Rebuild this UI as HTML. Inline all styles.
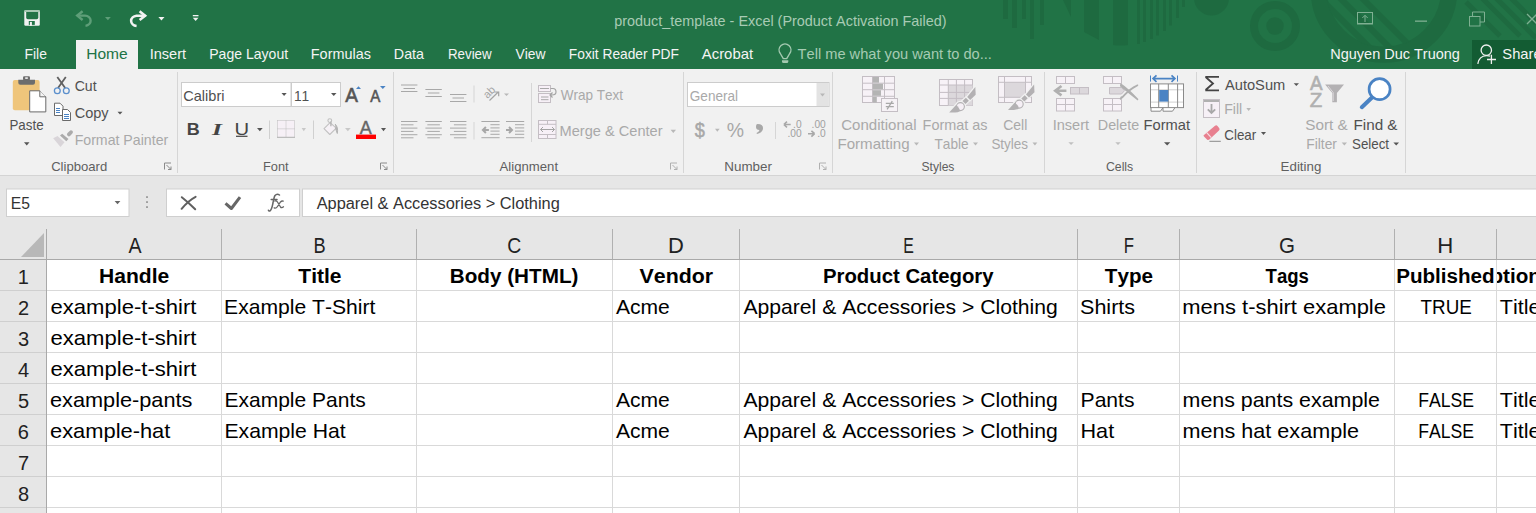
<!DOCTYPE html><html><head><meta charset="utf-8"><style>html,body{margin:0;padding:0;width:1536px;height:513px;overflow:hidden;background:#fff}svg{display:block;font-family:"Liberation Sans",sans-serif;font-kerning:none}text{white-space:pre}</style></head><body><svg width="1536" height="513" viewBox="0 0 1536 513"><rect x="0" y="0" width="1536" height="69" fill="#217346" />
<g fill="#1e6a40"><rect x="1003" y="0" width="5" height="19"/><rect x="1012" y="0" width="5" height="28"/><rect x="1022" y="0" width="4" height="19"/><rect x="1030" y="0" width="4" height="39"/><rect x="1040" y="0" width="4" height="25"/><path d="M1063 0 L1071 0 L1071 17 Z"/><path d="M1084 0 L1099 0 L1099 40 L1084 32 Z"/><path d="M1113 0 L1128 0 L1128 45 Q1120 46 1113 45 Z"/><rect x="1137" y="0" width="3" height="44"/><rect x="1143" y="0" width="3" height="42"/><rect x="1150" y="0" width="3" height="39"/><rect x="1156" y="0" width="3" height="35.5"/><rect x="1163" y="0" width="3" height="31"/><rect x="1169" y="0" width="3" height="25.5"/><rect x="1176" y="0" width="3" height="18"/><rect x="1182" y="0" width="3" height="7"/><circle cx="1211.5" cy="-2" r="17.5"/><circle cx="1275" cy="26" r="21" fill="none" stroke="#1e6a40" stroke-width="8"/><circle cx="1275" cy="26" r="8.7"/><circle cx="1384" cy="-10.6" r="65.2" fill="none" stroke="#1e6a40" stroke-width="16.4"/></g>
<clipPath id="cc"><circle cx="1384" cy="-10.6" r="58"/></clipPath>
<g stroke="#1e6a40" stroke-width="6" clip-path="url(#cc)"><line x1="1310" y1="-12" x2="1374" y2="52"/><line x1="1330" y1="-12" x2="1394" y2="52"/><line x1="1352" y1="-12" x2="1416" y2="52"/></g>
<g stroke="#1e6a40" stroke-width="5"><line x1="1466" y1="2" x2="1500" y2="36"/><line x1="1478" y1="-6" x2="1520" y2="36"/><line x1="1492" y1="-6" x2="1536" y2="38"/><line x1="1507" y1="-6" x2="1536" y2="23"/></g>
<rect x="1472" y="40" width="64" height="29" fill="#135c33" />
<rect x="76" y="40" width="62" height="29" fill="#f1f1f1" />
<g><rect x="24.3" y="10.3" width="15.5" height="15.5" rx="1.2" fill="#f2f2f2"/><rect x="24.3" y="10.3" width="15.5" height="1.6" fill="#9cc5ab"/><path d="M26.2 11.9 H38.3 V17.6 Q38.3 19.2 36.7 19.2 H27.8 Q26.2 19.2 26.2 17.6 Z" fill="#217346"/><rect x="28.8" y="21" width="6" height="3.9" fill="#217346"/><rect x="29.9" y="21.9" width="2" height="3.9" fill="#f2f2f2"/></g>
<g fill="none" stroke="#5e9e78" stroke-width="2.4" stroke-linecap="butt"><path d="M77 15.6 H85 A6.2 5.2 0 0 1 85.5 25.9"/><path d="M82.6 11.2 L77.2 15.6 L82.6 20" /></g>
<path d="M105 17.1 H110.8 L107.9 20.3 Z" fill="#5e9e78"/>
<g fill="none" stroke="#f2f2f2" stroke-width="2.5"><path d="M145.5 15.7 H136.5 A6.3 5.2 0 0 0 136.6 26"/><path d="M139.6 11.2 L145.2 15.7 L139.6 20.1" /></g>
<path d="M158.4 17 H164.5 L161.45 20.6 Z" fill="#f2f2f2"/>
<rect x="192.8" y="15" width="5.7" height="1.3" fill="#f2f2f2"/><path d="M192.8 17.8 H198.5 L195.65 21.1 Z" fill="#f2f2f2"/>
<text x="614.27" y="25.60" font-size="14.5" font-weight="normal" fill="#a8cbb4" textLength="332.32" lengthAdjust="spacingAndGlyphs" >product_template - Excel (Product Activation Failed)</text>
<g fill="none" stroke="#7fb092" stroke-width="1"><rect x="1357.5" y="12.5" width="15" height="11.5"/><line x1="1357.5" y1="23.5" x2="1372.5" y2="23.5"/><path d="M1365 22 V15.5 M1362.3 18 L1365 15.3 L1367.7 18"/><rect x="1469.5" y="16.5" width="10.5" height="9.5"/><path d="M1472.5 16.5 V12 H1484.5 V22 H1480"/><path d="M1527 14 L1537 24 M1537 14 L1527 24" stroke-width="1.3"/></g>
<rect x="1415" y="20.5" width="12" height="1.3" fill="#7fb092"/>
<text x="24.56" y="59.30" font-size="14.5" font-weight="normal" fill="#f4f4f4" textLength="22.35" lengthAdjust="spacingAndGlyphs" >File</text>
<text x="86.22" y="59.30" font-size="14.5" font-weight="normal" fill="#217346" textLength="41.47" lengthAdjust="spacingAndGlyphs" >Home</text>
<text x="149.65" y="59.30" font-size="14.5" font-weight="normal" fill="#f4f4f4" textLength="36.45" lengthAdjust="spacingAndGlyphs" >Insert</text>
<text x="209.25" y="59.30" font-size="14.5" font-weight="normal" fill="#f4f4f4" textLength="78.85" lengthAdjust="spacingAndGlyphs" >Page Layout</text>
<text x="310.82" y="59.30" font-size="14.5" font-weight="normal" fill="#f4f4f4" textLength="60.10" lengthAdjust="spacingAndGlyphs" >Formulas</text>
<text x="393.83" y="59.30" font-size="14.5" font-weight="normal" fill="#f4f4f4" textLength="30.17" lengthAdjust="spacingAndGlyphs" >Data</text>
<text x="447.91" y="59.30" font-size="14.5" font-weight="normal" fill="#f4f4f4" textLength="43.76" lengthAdjust="spacingAndGlyphs" >Review</text>
<text x="515.54" y="59.30" font-size="14.5" font-weight="normal" fill="#f4f4f4" textLength="30.03" lengthAdjust="spacingAndGlyphs" >View</text>
<text x="568.87" y="59.30" font-size="14.5" font-weight="normal" fill="#f4f4f4" textLength="110.08" lengthAdjust="spacingAndGlyphs" >Foxit Reader PDF</text>
<text x="701.77" y="59.30" font-size="14.5" font-weight="normal" fill="#f4f4f4" textLength="51.34" lengthAdjust="spacingAndGlyphs" >Acrobat</text>
<text x="797.57" y="59.30" font-size="14.5" font-weight="normal" fill="#a6cbb3" textLength="194.36" lengthAdjust="spacingAndGlyphs" >Tell me what you want to do...</text>
<path d="M783.3 58.6 L780.3 53.5 A5.9 5.9 0 1 1 789.7 53.5 L786.7 58.6 Z" fill="none" stroke="#a3c9b0" stroke-width="1.4" stroke-linejoin="round"/><path d="M782 60.2 H788.3 V61.5 Q788.3 63 786.8 63 H783.5 Q782 63 782 61.5 Z" fill="#a3c9b0"/>
<text x="1330.31" y="59.30" font-size="14.5" font-weight="normal" fill="#f4f4f4" textLength="129.62" lengthAdjust="spacingAndGlyphs" >Nguyen Duc Truong</text>
<text x="1502.33" y="59.30" font-size="14.5" font-weight="normal" fill="#f4f4f4" textLength="39.32" lengthAdjust="spacingAndGlyphs" >Share</text>
<g fill="none" stroke="#f0f0f0" stroke-width="1.3"><circle cx="1486.3" cy="50.2" r="5.2"/><path d="M1477.8 63.8 Q1479 56 1486.5 55.6 Q1488.5 55.5 1490 56.2"/><path d="M1487 59.5 H1496 M1491.4 54.8 V64"/></g>
<rect x="0" y="69" width="1536" height="107" fill="#f1f1f1" />
<rect x="0" y="175" width="1536" height="1" fill="#d4d4d4" />
<rect x="0" y="176" width="1536" height="53" fill="#e6e6e6" />
<rect x="177" y="72" width="1" height="101" fill="#d6d6d6" />
<rect x="393" y="72" width="1" height="101" fill="#d6d6d6" />
<rect x="683" y="72" width="1" height="101" fill="#d6d6d6" />
<rect x="832" y="72" width="1" height="101" fill="#d6d6d6" />
<rect x="1044" y="72" width="1" height="101" fill="#d6d6d6" />
<rect x="1196" y="72" width="1" height="101" fill="#d6d6d6" />
<rect x="1405" y="72" width="1" height="101" fill="#d6d6d6" />
<text x="51.13" y="170.60" font-size="13.5" font-weight="normal" fill="#5f5f5f" textLength="56.11" lengthAdjust="spacingAndGlyphs" >Clipboard</text>
<g fill="none" stroke="#8a8a8a" stroke-width="1"><path d="M164.5 169.5 V163.0 H171"/><path d="M166.5 165.0 L171 169.5 M171 166.5 V169.5 H168"/></g>
<text x="9.40" y="129.80" font-size="14.5" font-weight="normal" fill="#505050" textLength="34.19" lengthAdjust="spacingAndGlyphs" >Paste</text>
<path d="M24 142.3 H29.5 L26.75 145.5 Z" fill="#555"/>
<g><rect x="12.8" y="80.1" width="26.8" height="30.1" rx="2" fill="#efc57b"/><path d="M18.3 79.7 H35 V82.8 Q35 84.8 33 84.8 H20.3 Q18.3 84.8 18.3 82.8 Z" fill="#6d6d6d"/><rect x="23" y="76.2" width="7" height="4" rx="1.2" fill="#6d6d6d"/><rect x="25.2" y="77.3" width="2.6" height="1.6" fill="#efefef"/><path d="M29.7 90.8 H39.8 L45.8 96.8 V111.9 H29.7 Z" fill="#fff" stroke="#6a6a6a" stroke-width="1"/><path d="M39.8 90.8 V96.8 H45.8" fill="#f4f4f4" stroke="#6a6a6a" stroke-width="1"/></g>
<text x="74.68" y="91.00" font-size="14.5" font-weight="normal" fill="#505050" textLength="21.92" lengthAdjust="spacingAndGlyphs" >Cut</text>
<g fill="none"><path d="M57.3 77 L65.2 88 M65.8 77 L58 88" stroke="#606060" stroke-width="1.8"/><circle cx="57.3" cy="90.7" r="2.9" stroke="#5b8fcc" stroke-width="1.3"/><circle cx="66.3" cy="90.7" r="2.9" stroke="#5b8fcc" stroke-width="1.3"/></g>
<text x="74.66" y="117.80" font-size="14.5" font-weight="normal" fill="#505050" textLength="33.97" lengthAdjust="spacingAndGlyphs" >Copy</text>
<path d="M117.5 111.7 H122.5 L120.0 114.5 Z" fill="#555"/>
<g fill="#fff" stroke="#6a6a6a" stroke-width="1"><path d="M54.5 103.2 H60 L63 106.2 V115.5 H54.5 Z"/><path d="M62.5 109.5 H67.5 L70.5 112.5 V120.5 H62.5 Z"/></g><g stroke="#4a83c4" stroke-width="1"><path d="M56 108.5 H60 M56 110.5 H60 M56 112.5 H60 M64 114.5 H69 M64 116.5 H69 M64 118.5 H69"/></g>
<text x="74.64" y="144.90" font-size="14.5" font-weight="normal" fill="#a9a9a9" textLength="93.60" lengthAdjust="spacingAndGlyphs" >Format Painter</text>
<g><path d="M53.2 138.2 L57.5 136 L64.5 142.3 L60.5 146.9 Z" fill="#d9d5d9"/><path d="M60 135.5 L62.2 133.8 L68.5 139.1 L66.3 141.3 Z" fill="#ababab"/><path d="M68.9 134.4 L71 132.2" stroke="#ababab" stroke-width="3.8" stroke-linecap="round"/></g>
<text x="262.95" y="170.60" font-size="13.5" font-weight="normal" fill="#5f5f5f" textLength="25.65" lengthAdjust="spacingAndGlyphs" >Font</text>
<g fill="none" stroke="#8a8a8a" stroke-width="1"><path d="M380.5 169.5 V163.0 H387"/><path d="M382.5 165.0 L387 169.5 M387 166.5 V169.5 H384"/></g>
<rect x="181.5" y="82.5" width="109.5" height="24" fill="#fff" stroke="#cccccc" stroke-width="1"/>
<rect x="291.5" y="82.5" width="49" height="24" fill="#fff" stroke="#cccccc" stroke-width="1"/>
<text x="183.26" y="101.20" font-size="14.5" font-weight="normal" fill="#505050" textLength="41.22" lengthAdjust="spacingAndGlyphs" >Calibri</text>
<path d="M281.5 93 H286.7 L284.1 96 Z" fill="#555"/>
<text x="293.95" y="101.20" font-size="14.5" font-weight="normal" fill="#505050" textLength="15.32" lengthAdjust="spacingAndGlyphs" >11</text>
<path d="M331 93 H336.5 L333.75 96 Z" fill="#555"/>
<text x="345.16" y="102.30" font-size="19.5" font-weight="normal" fill="#555" textLength="12.67" lengthAdjust="spacingAndGlyphs" stroke="#555" stroke-width="0.6">A</text>
<path d="M356 89 H361 L358.5 86.3 Z" fill="#4a83c4"/>
<text x="370.17" y="102.30" font-size="17" font-weight="normal" fill="#555" textLength="10.06" lengthAdjust="spacingAndGlyphs" stroke="#555" stroke-width="0.6">A</text>
<path d="M380 86 H385.6 L382.8 89 Z" fill="#4a83c4"/>
<text x="186.79" y="134.60" font-size="17" font-weight="bold" fill="#444" textLength="13.03" lengthAdjust="spacingAndGlyphs" >B</text>
<text x="212" y="134.6" font-size="17.5" font-style="italic" font-weight="bold" fill="#444" font-family="Liberation Serif" textLength="10" lengthAdjust="spacingAndGlyphs">I</text>
<text x="234.44" y="134.60" font-size="16.5" font-weight="normal" fill="#444" textLength="14.62" lengthAdjust="spacingAndGlyphs" >U</text>
<rect x="236" y="135.7" width="11.5" height="1.2" fill="#444" />
<path d="M257 128 H262.7 L259.85 131.3 Z" fill="#555"/>
<rect x="269" y="120.5" width="1" height="18.5" fill="#d0d0d0" />
<rect x="277.5" y="120.5" width="17" height="16.5" fill="#f6f0f6"/><g fill="none" stroke="#bdbdbd" stroke-width="1" stroke-dasharray="1 1"><path d="M277.5 120.5 H294.5 V137 M277.5 120.5 V137 M286 120.5 V137 M277.5 128.8 H294.5"/></g><path d="M277 137.3 H295" stroke="#b0b0b0" stroke-width="1"/>
<path d="M301.6 128 H306 L303.8 131.3 Z" fill="#c8c8c8"/>
<rect x="313" y="120.5" width="1" height="18.5" fill="#d0d0d0" />
<path d="M330.1 122.6 L336.2 128.2 L329.8 134.5 L324 128.7 Z" fill="#f6f1f6" stroke="#c2c2c2" stroke-width="1.1" stroke-linejoin="round"/><circle cx="329.8" cy="120.6" r="1.9" fill="none" stroke="#c0c0c0" stroke-width="1.1"/><path d="M330.9 121.5 V126.3" stroke="#b0b0b0" stroke-width="1.2"/><path d="M335 124 Q338.5 127 337.3 133.5 Q336 130 335.5 128" fill="#b4b4b4" stroke="#b4b4b4" stroke-width="1"/>
<path d="M345 128 H350.7 L347.85 131.3 Z" fill="#c8c8c8"/>
<text x="359.76" y="133.70" font-size="18" font-weight="normal" fill="#666" textLength="11.97" lengthAdjust="spacingAndGlyphs" stroke="#666" stroke-width="0.4">A</text>
<rect x="356" y="134.6" width="20" height="4.4" fill="#ff0000" />
<path d="M381 128 H386 L383.5 131.3 Z" fill="#555"/>
<text x="499.57" y="170.60" font-size="13.5" font-weight="normal" fill="#5f5f5f" textLength="58.52" lengthAdjust="spacingAndGlyphs" >Alignment</text>
<g fill="none" stroke="#b0b0b0" stroke-width="1"><path d="M670.5 169.5 V163.0 H677"/><path d="M672.5 165.0 L677 169.5 M677 166.5 V169.5 H674"/></g>
<rect x="401" y="84.5" width="16.399999999999977" height="1" fill="#a8a8a8" />
<rect x="403.5" y="88" width="11.5" height="1" fill="#a8a8a8" />
<rect x="401" y="91" width="16.399999999999977" height="1" fill="#a8a8a8" />
<rect x="425.4" y="89" width="16.399999999999977" height="1" fill="#a8a8a8" />
<rect x="427.9" y="92.5" width="11.5" height="1" fill="#a8a8a8" />
<rect x="425.4" y="96" width="16.399999999999977" height="1" fill="#a8a8a8" />
<rect x="450" y="94" width="16.399999999999977" height="1" fill="#a8a8a8" />
<rect x="452.5" y="97.5" width="11.5" height="1" fill="#a8a8a8" />
<rect x="450" y="101" width="16.399999999999977" height="1" fill="#a8a8a8" />
<rect x="473.5" y="85.5" width="1" height="17" fill="#d6d6d6" />
<text x="0" y="0" font-size="11" fill="#a4a4a4" transform="translate(487.5 99) rotate(-45)" textLength="12" lengthAdjust="spacingAndGlyphs">ab</text>
<path d="M489.5 100.5 L498.5 91.8 M494.5 92 H498.7 V96.2" stroke="#a4a4a4" stroke-width="1.2" fill="none"/>
<path d="M504 93.5 H509 L506.5 96 Z" fill="#b8b8b8"/>
<rect x="401" y="121" width="16.399999999999977" height="1" fill="#a8a8a8" />
<rect x="401" y="124.3" width="12.5" height="1" fill="#a8a8a8" />
<rect x="401" y="127.6" width="16.399999999999977" height="1" fill="#a8a8a8" />
<rect x="401" y="130.9" width="12.5" height="1" fill="#a8a8a8" />
<rect x="401" y="134.2" width="16.399999999999977" height="1" fill="#a8a8a8" />
<rect x="401" y="137.3" width="12.5" height="1" fill="#a8a8a8" />
<rect x="425.4" y="121" width="16.399999999999977" height="1" fill="#a8a8a8" />
<rect x="427.34999999999997" y="124.3" width="12.5" height="1" fill="#a8a8a8" />
<rect x="425.4" y="127.6" width="16.399999999999977" height="1" fill="#a8a8a8" />
<rect x="427.34999999999997" y="130.9" width="12.5" height="1" fill="#a8a8a8" />
<rect x="425.4" y="134.2" width="16.399999999999977" height="1" fill="#a8a8a8" />
<rect x="427.34999999999997" y="137.3" width="12.5" height="1" fill="#a8a8a8" />
<rect x="450.0" y="121" width="16.399999999999977" height="1" fill="#a8a8a8" />
<rect x="453.9" y="124.3" width="12.5" height="1" fill="#a8a8a8" />
<rect x="450.0" y="127.6" width="16.399999999999977" height="1" fill="#a8a8a8" />
<rect x="453.9" y="130.9" width="12.5" height="1" fill="#a8a8a8" />
<rect x="450.0" y="134.2" width="16.399999999999977" height="1" fill="#a8a8a8" />
<rect x="453.9" y="137.3" width="12.5" height="1" fill="#a8a8a8" />
<rect x="473.5" y="122" width="1" height="17.5" fill="#d6d6d6" />
<rect x="481.4" y="121" width="18.19999999999999" height="1" fill="#a8a8a8" />
<rect x="481.4" y="137.2" width="18.19999999999999" height="1" fill="#a8a8a8" />
<rect x="490.4" y="124.2" width="9.199999999999989" height="1" fill="#a8a8a8" />
<rect x="490.4" y="127.4" width="9.199999999999989" height="1" fill="#a8a8a8" />
<rect x="490.4" y="130.6" width="9.199999999999989" height="1" fill="#a8a8a8" />
<rect x="490.4" y="133.8" width="9.199999999999989" height="1" fill="#a8a8a8" />
<path d="M488.9 130 H482.9 M485.9 127 L482.9 130 L485.9 133" stroke="#a8a8a8" stroke-width="2" fill="none"/>
<rect x="506" y="121" width="18.200000000000045" height="1" fill="#a8a8a8" />
<rect x="506" y="137.2" width="18.200000000000045" height="1" fill="#a8a8a8" />
<rect x="515" y="124.2" width="9.200000000000045" height="1" fill="#a8a8a8" />
<rect x="515" y="127.4" width="9.200000000000045" height="1" fill="#a8a8a8" />
<rect x="515" y="130.6" width="9.200000000000045" height="1" fill="#a8a8a8" />
<rect x="515" y="133.8" width="9.200000000000045" height="1" fill="#a8a8a8" />
<path d="M506 130 H512 M509 127 L512 130 L509 133" stroke="#a8a8a8" stroke-width="2" fill="none"/>
<rect x="531" y="83" width="1" height="59" fill="#d6d6d6" />
<g fill="#f7f0f7" stroke="#c4bec4" stroke-width="1"><rect x="538.5" y="85.5" width="12" height="6"/><rect x="538.5" y="93.5" width="12" height="9"/></g><path d="M540 88.5 H549 M541 97 H548.5 M541 99.7 H548.5" stroke="#a8a8a8" stroke-width="1"/><path d="M550.5 88.5 H553 Q556 88.5 556 92 Q556 95 552 95 H550 M552.5 92.5 L550 95 L552.5 97.5" stroke="#a4a4a4" stroke-width="1.2" fill="none"/>
<text x="560.74" y="100.30" font-size="14.5" font-weight="normal" fill="#a9a9a9" textLength="62.36" lengthAdjust="spacingAndGlyphs" >Wrap Text</text>
<g fill="#f7f0f7" stroke="#c4bec4" stroke-width="1"><rect x="538.5" y="120.5" width="17.5" height="18"/><path d="M538.5 124.3 H556 M538.5 134.5 H556 M547.5 120.5 V124.3 M547.5 134.5 V138.5" fill="none"/></g><path d="M540.5 129.5 H554.5 M543 127 L540.5 129.5 L543 132 M552 127 L554.5 129.5 L552 132" stroke="#a4a4a4" stroke-width="1" fill="none"/>
<text x="559.60" y="135.70" font-size="14.5" font-weight="normal" fill="#a9a9a9" textLength="102.94" lengthAdjust="spacingAndGlyphs" >Merge &amp; Center</text>
<path d="M670.6 129.8 H676 L673.3 133 Z" fill="#b8b8b8"/>
<text x="724.30" y="170.60" font-size="13.5" font-weight="normal" fill="#5f5f5f" textLength="47.62" lengthAdjust="spacingAndGlyphs" >Number</text>
<g fill="none" stroke="#b0b0b0" stroke-width="1"><path d="M819.5 169.5 V163.0 H826"/><path d="M821.5 165.0 L826 169.5 M826 166.5 V169.5 H823"/></g>
<rect x="687.5" y="82.5" width="141.5" height="24" fill="#fff" stroke="#cccccc" stroke-width="1"/>
<rect x="816.5" y="83" width="12" height="23" fill="#e3e3e3" />
<path d="M820 93.5 H825 L822.5 96.5 Z" fill="#b8b8b8"/>
<text x="689.82" y="100.70" font-size="14.5" font-weight="normal" fill="#a9a9a9" textLength="48.29" lengthAdjust="spacingAndGlyphs" >General</text>
<text x="694.81" y="137.00" font-size="20.5" font-weight="normal" fill="#a8a8a8" textLength="10.09" lengthAdjust="spacingAndGlyphs" stroke="#a8a8a8" stroke-width="0.5">$</text>
<path d="M715 128.7 H719.7 L717.35 131.7 Z" fill="#b8b8b8"/>
<text x="726.71" y="136.90" font-size="19.5" font-weight="normal" fill="#a8a8a8" textLength="17.29" lengthAdjust="spacingAndGlyphs" >%</text>
<path d="M757.5 124 Q763.5 124 763 129 Q762 133 757 134 L756.5 133 Q759 132 759.5 130 Q756 130 756 127 Q756 124 757.5 124 Z" fill="#a8a8a8"/>
<rect x="775" y="122" width="1" height="17" fill="#d6d6d6" />
<text x="793.09" y="127.8" font-size="10.2" fill="#a0a0a0">.0</text>
<text x="787.42" y="137.3" font-size="10.2" fill="#a0a0a0">.00</text>
<text x="811.62" y="127.8" font-size="10.2" fill="#a0a0a0">.00</text>
<text x="817.29" y="137.3" font-size="10.2" fill="#a0a0a0">.0</text>
<path d="M783.8 124.5 L787 121.6 M783.8 124.5 L787 127.4 M784 124.5 H790.7" stroke="#a8a8a8" stroke-width="1.6" fill="none"/>
<path d="M814.6 133.7 L811.4 130.8 M814.6 133.7 L811.4 136.6 M808 133.7 H814.4" stroke="#a8a8a8" stroke-width="1.6" fill="none"/>
<text x="921.45" y="170.60" font-size="13.5" font-weight="normal" fill="#5f5f5f" textLength="32.99" lengthAdjust="spacingAndGlyphs" >Styles</text>
<g><rect x="862.5" y="76.5" width="32" height="26" fill="#f7f2f7" stroke="#c4bec4"/><path d="M862.5 83.2 H894.5 M862.5 89.7 H894.5 M862.5 96.3 H894.5 M872.5 76.5 V102.5 M884.5 76.5 V102.5" stroke="#c4bec4" fill="none"/><rect x="873" y="77" width="6" height="5.7" fill="#b4b4b4"/><rect x="873" y="83.7" width="10" height="5.5" fill="#b4b4b4"/><rect x="873" y="90.2" width="8" height="5.6" fill="#b4b4b4"/><rect x="873" y="96.8" width="3.8" height="5.7" fill="#b4b4b4"/><rect x="881.5" y="98.5" width="16" height="13" fill="#f6f2f6" stroke="#c4bec4"/><path d="M885.8 103.3 H893.8 M885.8 106.7 H893.8 M892.3 101.1 L887.1 109.3" stroke="#a8a8a8" stroke-width="1.3" fill="none"/></g>
<text x="841.24" y="129.80" font-size="14.5" font-weight="normal" fill="#a9a9a9" textLength="75.27" lengthAdjust="spacingAndGlyphs" >Conditional</text>
<text x="837.46" y="149.20" font-size="14.5" font-weight="normal" fill="#a9a9a9" textLength="72.11" lengthAdjust="spacingAndGlyphs" >Formatting</text>
<path d="M914 142.6 H919 L916.5 145.5 Z" fill="#b8b8b8"/>
<g><rect x="939.5" y="79.5" width="33" height="26" fill="#f7f2f7" stroke="#c4bec4"/><rect x="948" y="85" width="24.5" height="20.5" fill="#dcd8dc"/><path d="M939.5 85 H972.5 M939.5 92.4 H972.5 M939.5 98.4 H972.5 M948.3 79.5 V105.5 M956.4 79.5 V105.5 M964.6 79.5 V105.5" stroke="#c4bec4" fill="none"/></g>
<g fill="#f1f1f1" stroke="#f1f1f1" stroke-width="2.4"><path d="M975.3 87.0 L975.7 94.7 L970.2 99.9 L967.2 96.9 Z"/><path d="M965.9 97.7 L968.9 100.7 L965.5 103.9 L962.5 100.9 Z"/><circle cx="960.4" cy="106.6" r="4.6"/><path d="M949.2 112.4 L955.5 105.5 Q958.5 107.5 959.5 111.0 Q957.5 112.4 955.0 112.4 Z"/></g>
<path d="M975.3 87.0 L975.7 94.7 L970.2 99.9 L967.2 96.9 Z" fill="#b3b1b3"/><path d="M965.9 97.7 L968.9 100.7 L965.5 103.9 L962.5 100.9 Z" fill="#b3b1b3"/><circle cx="960.4" cy="106.6" r="4" fill="#f6f0f6" stroke="#b3b1b3" stroke-width="1.1"/><path d="M949.2 112.4 L955.8 105.2 Q959.5 107.0 960.0 111.2 Q958.0 112.4 955.0 112.4 Z" fill="#b3b1b3"/>
<text x="922.62" y="129.80" font-size="14.5" font-weight="normal" fill="#a9a9a9" textLength="64.90" lengthAdjust="spacingAndGlyphs" >Format as</text>
<text x="934.49" y="149.20" font-size="14.5" font-weight="normal" fill="#a9a9a9" textLength="34.11" lengthAdjust="spacingAndGlyphs" >Table</text>
<path d="M973 142.6 H978 L975.5 145.5 Z" fill="#b8b8b8"/>
<g><rect x="998.5" y="76.5" width="33" height="26" fill="#f7f2f7" stroke="#c4bec4"/><rect x="1004.5" y="82.3" width="21" height="15" fill="#dcd8dc"/><path d="M998.5 82.3 H1031.5 M998.5 97.3 H1031.5 M1004.5 76.5 V102.5 M1025.5 76.5 V102.5" stroke="#c4bec4" fill="none"/></g>
<g fill="#f1f1f1" stroke="#f1f1f1" stroke-width="2.4"><path d="M1034.1 84.5 L1034.5 92.2 L1029.0 97.4 L1026.0 94.4 Z"/><path d="M1024.7 95.2 L1027.7 98.2 L1024.3 101.4 L1021.3 98.4 Z"/><circle cx="1019.2" cy="104.1" r="4.6"/><path d="M1008.0 109.9 L1014.3 103.0 Q1017.3 105.0 1018.3 108.5 Q1016.3 109.9 1013.8 109.9 Z"/></g>
<path d="M1034.1 84.5 L1034.5 92.2 L1029.0 97.4 L1026.0 94.4 Z" fill="#b3b1b3"/><path d="M1024.7 95.2 L1027.7 98.2 L1024.3 101.4 L1021.3 98.4 Z" fill="#b3b1b3"/><circle cx="1019.2" cy="104.1" r="4" fill="#f6f0f6" stroke="#b3b1b3" stroke-width="1.1"/><path d="M1008.0 109.9 L1014.6 102.7 Q1018.3 104.5 1018.8 108.7 Q1016.8 109.9 1013.8 109.9 Z" fill="#b3b1b3"/>
<text x="1003.29" y="129.80" font-size="14.5" font-weight="normal" fill="#a9a9a9" textLength="24.04" lengthAdjust="spacingAndGlyphs" >Cell</text>
<text x="991.39" y="149.20" font-size="14.5" font-weight="normal" fill="#a9a9a9" textLength="36.60" lengthAdjust="spacingAndGlyphs" >Styles</text>
<path d="M1032.5 142.6 H1037.3 L1034.9 145.5 Z" fill="#b8b8b8"/>
<text x="1105.98" y="170.60" font-size="13.5" font-weight="normal" fill="#5f5f5f" textLength="27.27" lengthAdjust="spacingAndGlyphs" >Cells</text>
<g fill="#f7f2f7" stroke="#c4bec4"><rect x="1056.5" y="76.5" width="18" height="7"/><path d="M1065.5 76.5 V83.5" fill="none"/><rect x="1056.5" y="98.5" width="18" height="12.5"/><path d="M1065.5 98.5 V111 M1056.5 104.5 H1074.5" fill="none"/></g>
<rect x="1070.5" y="87.5" width="18" height="6.5" fill="#dcd8dc" stroke="#c4bec4"/><path d="M1079.5 87.5 V94" stroke="#c4bec4"/>
<path d="M1066.4 90.7 H1055.5 M1061.5 86 L1055.2 90.7 L1061.5 95.4" stroke="#b0b0b0" stroke-width="2.6" fill="none"/>
<text x="1052.65" y="129.80" font-size="14.5" font-weight="normal" fill="#a9a9a9" textLength="36.45" lengthAdjust="spacingAndGlyphs" >Insert</text>
<path d="M1068.4 142.2 H1073.8 L1071.1 145 Z" fill="#c0c0c0"/>
<g fill="#f7f2f7" stroke="#c4bec4"><rect x="1103.5" y="76.5" width="18" height="7"/><path d="M1112.5 76.5 V83.5" fill="none"/><rect x="1103.5" y="98.5" width="18" height="12.5"/><path d="M1112.5 98.5 V111 M1103.5 104.5 H1121.5" fill="none"/></g>
<path d="M1109.5 87.5 H1121.5 L1124.5 90.7 L1121.5 94 H1109.5 Z" fill="#dcd8dc" stroke="#c4bec4"/>
<g stroke="#f1f1f1" stroke-width="2" fill="none"><path d="M1121 84.5 Q1129 91 1137 99 M1137 85.3 Q1128 90.5 1121 98.8"/></g>
<path d="M1121 84.3 Q1128 89 1137.5 99.3 Q1129.5 93 1120.8 85.8 Z M1137.5 85.2 Q1130 88 1120.6 98.9 Q1121.5 96 1122.3 97.5 Q1128 90.5 1137.5 85.2 Z" fill="#b0b0b0" stroke="#b0b0b0" stroke-width="1.6" stroke-linejoin="round"/>
<text x="1097.82" y="129.80" font-size="14.5" font-weight="normal" fill="#a9a9a9" textLength="41.41" lengthAdjust="spacingAndGlyphs" >Delete</text>
<path d="M1115.3 142.2 H1120.7 L1118.0 145 Z" fill="#c0c0c0"/>
<g><path d="M1150.5 75.5 V81.6 M1177.5 75.5 V81.6" stroke="#4a83c4" stroke-width="1"/><path d="M1153 78.6 H1175 M1156.5 75.3 L1153 78.6 L1156.5 81.9 M1171.5 75.3 L1175 78.6 L1171.5 81.9" stroke="#4a83c4" stroke-width="1.6" fill="none"/><path d="M1151 107.6 V111.2 H1160.5 L1163 107.6 M1163 107.6 V111.2 H1172.5 L1175 107.6" stroke="#8a8a8a" fill="#fff"/><rect x="1150.5" y="83.9" width="33" height="23.7" fill="#fff" stroke="#8a8a8a"/><path d="M1151 89.8 H1183 M1151 102.1 H1183" stroke="#d0d0d0" fill="none"/><path d="M1158.7 83.9 V107.6 M1168.3 83.9 V107.6 M1177.6 83.9 V107.6" stroke="#8a8a8a" fill="none"/><rect x="1159.2" y="90" width="9.1" height="11.6" fill="#4a83c4"/></g>
<text x="1143.60" y="129.80" font-size="14.5" font-weight="normal" fill="#505050" textLength="46.51" lengthAdjust="spacingAndGlyphs" >Format</text>
<path d="M1164 142.2 H1170.3 L1167.15 145.5 Z" fill="#555"/>
<text x="1280.61" y="170.60" font-size="13.5" font-weight="normal" fill="#5f5f5f" textLength="40.75" lengthAdjust="spacingAndGlyphs" >Editing</text>
<path d="M1205.3 76.8 H1219 M1205.6 77 L1213 83.5 L1205.6 90 M1205.3 90.3 H1219" stroke="#444" stroke-width="1.8" fill="none" stroke-linejoin="miter"/>
<text x="1224.97" y="89.80" font-size="14.5" font-weight="normal" fill="#505050" textLength="60.29" lengthAdjust="spacingAndGlyphs" >AutoSum</text>
<path d="M1293.7 83.3 H1299 L1296.35 86 Z" fill="#555"/>
<g><rect x="1203.5" y="99.5" width="16" height="18" fill="#f6f0f6" stroke="#c4bec4"/><rect x="1204" y="100" width="15" height="2" fill="#b0b0b0"/><path d="M1211.5 104 V113 M1207.8 109.3 L1211.5 113 L1215.2 109.3" stroke="#a8a8a8" stroke-width="1.8" fill="none"/></g>
<text x="1224.24" y="114.30" font-size="14.5" font-weight="normal" fill="#a9a9a9" textLength="18.00" lengthAdjust="spacingAndGlyphs" >Fill</text>
<path d="M1246.3 108 H1251 L1248.65 111 Z" fill="#b8b8b8"/>
<g><path d="M1203.7 135.3 L1215 125.8 Q1216.5 124.8 1217.5 126 L1219.3 128.3 Q1220 129.6 1219 130.5 L1209.4 139.6 Q1208 140.5 1207 139.5 L1204 136.5 Q1203.2 135.8 1203.7 135.3 Z" fill="#e8808f"/><path d="M1206 131.8 L1211.3 137.6" stroke="#f6dde2" stroke-width="1.2"/><path d="M1209.4 141.3 H1220.8" stroke="#8a8a8a" stroke-width="1"/></g>
<text x="1224.32" y="139.60" font-size="14.5" font-weight="normal" fill="#505050" textLength="31.90" lengthAdjust="spacingAndGlyphs" >Clear</text>
<path d="M1261 132 H1266 L1263.5 135 Z" fill="#555"/>
<text x="1309.96" y="90.00" font-size="20" font-weight="normal" fill="#b0b0b0" textLength="12.57" lengthAdjust="spacingAndGlyphs" stroke="#b0b0b0" stroke-width="0.6">A</text>
<text x="1309.65" y="107.20" font-size="20" font-weight="normal" fill="#b0b0b0" textLength="12.49" lengthAdjust="spacingAndGlyphs" stroke="#b0b0b0" stroke-width="0.6">Z</text>
<path d="M1325.1 84.6 H1344 L1336.9 93 V102.2 H1332.3 V93 Z" fill="#b3b1b3"/><path d="M1328 86 L1333.2 92.5 V101" stroke="#dcd8dc" stroke-width="1" fill="none"/>
<text x="1305.30" y="129.80" font-size="14.5" font-weight="normal" fill="#a9a9a9" textLength="42.53" lengthAdjust="spacingAndGlyphs" >Sort &amp;</text>
<text x="1306.27" y="149.20" font-size="14.5" font-weight="normal" fill="#a9a9a9" textLength="30.66" lengthAdjust="spacingAndGlyphs" >Filter</text>
<path d="M1341.7 142.6 H1347 L1344.35 145.5 Z" fill="#b8b8b8"/>
<g><path d="M1372.5 97 L1361.8 107.2" stroke="#4a83c4" stroke-width="4" stroke-linecap="round"/><circle cx="1379.6" cy="89.2" r="10.5" fill="#fff" stroke="#4a83c4" stroke-width="2.7"/></g>
<text x="1353.55" y="129.80" font-size="14.5" font-weight="normal" fill="#505050" textLength="43.99" lengthAdjust="spacingAndGlyphs" >Find &amp;</text>
<text x="1351.99" y="149.20" font-size="14.5" font-weight="normal" fill="#505050" textLength="37.10" lengthAdjust="spacingAndGlyphs" >Select</text>
<path d="M1393.4 142.6 H1399 L1396.2 145.5 Z" fill="#555"/>
<rect x="6.5" y="189" width="122.5" height="27.5" fill="#fff" stroke="#cfcfcf" stroke-width="1"/>
<text x="10.72" y="209.00" font-size="16.5" font-weight="normal" fill="#333" textLength="19.14" lengthAdjust="spacingAndGlyphs" >E5</text>
<path d="M114.6 201 H120.4 L117.5 204.3 Z" fill="#666"/>
<rect x="146" y="196.2" width="2" height="1.8" fill="#a0a0a0" />
<rect x="146" y="201.2" width="2" height="1.8" fill="#a0a0a0" />
<rect x="146" y="206.2" width="2" height="1.8" fill="#a0a0a0" />
<rect x="166.5" y="189" width="133" height="27.5" fill="#fff" stroke="#cfcfcf" stroke-width="1"/>
<path d="M181.8 197.2 Q188 202 195.2 209.2 M195.6 196.8 Q188.5 200.5 181.6 208.8" stroke="#606060" stroke-width="2" fill="none" stroke-linecap="round"/>
<path d="M225.5 203.3 L231.4 208.5 L240 197.2" stroke="#666" stroke-width="3" fill="none" stroke-linejoin="round"/>
<path d="M279.5 195 Q277 193.2 275 195.5 Q274 197 273 203 Q271.5 210.5 269.8 211 Q268.6 211.3 268.4 210.2 M271.2 199.5 H277" stroke="#666" stroke-width="1.5" fill="none" stroke-linecap="round"/>
<path d="M274.8 201 Q276.5 200.2 277.5 202 L280.5 207 Q281.5 208.4 283.5 206.8 M283.2 201.2 Q281.8 200.6 280.5 202 L277.5 206.5 Q276 208.7 274.2 207.8" stroke="#666" stroke-width="1.3" fill="none" stroke-linecap="round"/>
<rect x="302.5" y="189" width="1250" height="27.5" fill="#fff" stroke="#cfcfcf" stroke-width="1"/>
<text x="316.67" y="208.75" font-size="16" font-weight="normal" fill="#333" textLength="243.14" lengthAdjust="spacingAndGlyphs" >Apparel &amp; Accessories &gt; Clothing</text>
<rect x="0" y="229" width="1536" height="30" fill="#e6e6e6" />
<rect x="0" y="259" width="46" height="254" fill="#e6e6e6" />
<rect x="46" y="259" width="1490" height="254" fill="#ffffff" />
<rect x="221" y="229" width="1" height="30" fill="#b0b0b0" />
<rect x="221" y="259" width="1" height="254" fill="#d9d9d9" />
<rect x="416" y="229" width="1" height="30" fill="#b0b0b0" />
<rect x="416" y="259" width="1" height="254" fill="#d9d9d9" />
<rect x="612" y="229" width="1" height="30" fill="#b0b0b0" />
<rect x="612" y="259" width="1" height="254" fill="#d9d9d9" />
<rect x="739" y="229" width="1" height="30" fill="#b0b0b0" />
<rect x="739" y="259" width="1" height="254" fill="#d9d9d9" />
<rect x="1077" y="229" width="1" height="30" fill="#b0b0b0" />
<rect x="1077" y="259" width="1" height="254" fill="#d9d9d9" />
<rect x="1179" y="229" width="1" height="30" fill="#b0b0b0" />
<rect x="1179" y="259" width="1" height="254" fill="#d9d9d9" />
<rect x="1394" y="229" width="1" height="30" fill="#b0b0b0" />
<rect x="1394" y="259" width="1" height="254" fill="#d9d9d9" />
<rect x="1496" y="229" width="1" height="30" fill="#b0b0b0" />
<rect x="1496" y="259" width="1" height="254" fill="#d9d9d9" />
<rect x="46" y="290" width="1490" height="1" fill="#d9d9d9" />
<rect x="0" y="290" width="46" height="1" fill="#cfcfcf" />
<rect x="46" y="321" width="1490" height="1" fill="#d9d9d9" />
<rect x="0" y="321" width="46" height="1" fill="#cfcfcf" />
<rect x="46" y="352" width="1490" height="1" fill="#d9d9d9" />
<rect x="0" y="352" width="46" height="1" fill="#cfcfcf" />
<rect x="46" y="383" width="1490" height="1" fill="#d9d9d9" />
<rect x="0" y="383" width="46" height="1" fill="#cfcfcf" />
<rect x="46" y="414" width="1490" height="1" fill="#d9d9d9" />
<rect x="0" y="414" width="46" height="1" fill="#cfcfcf" />
<rect x="46" y="445" width="1490" height="1" fill="#d9d9d9" />
<rect x="0" y="445" width="46" height="1" fill="#cfcfcf" />
<rect x="46" y="476" width="1490" height="1" fill="#d9d9d9" />
<rect x="0" y="476" width="46" height="1" fill="#cfcfcf" />
<rect x="46" y="507" width="1490" height="1" fill="#d9d9d9" />
<rect x="0" y="507" width="46" height="1" fill="#cfcfcf" />
<rect x="0" y="259" width="1536" height="1" fill="#a9a9a9" />
<rect x="46" y="229" width="1" height="284" fill="#a9a9a9" />
<path d="M44 233 V257 H21 Z" fill="#b8b8b8"/>
<text x="128.46" y="252.70" font-size="21.3" font-weight="normal" fill="#222" textLength="13.08" lengthAdjust="spacingAndGlyphs" >A</text>
<text x="313.40" y="252.70" font-size="21.3" font-weight="normal" fill="#222" textLength="12.16" lengthAdjust="spacingAndGlyphs" >B</text>
<text x="507.31" y="252.70" font-size="21.3" font-weight="normal" fill="#222" textLength="14.03" lengthAdjust="spacingAndGlyphs" >C</text>
<text x="668.00" y="252.70" font-size="21.3" font-weight="normal" fill="#222" textLength="15.85" lengthAdjust="spacingAndGlyphs" >D</text>
<text x="903.30" y="252.70" font-size="21.3" font-weight="normal" fill="#222" textLength="10.58" lengthAdjust="spacingAndGlyphs" >E</text>
<text x="1123.82" y="252.70" font-size="21.3" font-weight="normal" fill="#222" textLength="10.25" lengthAdjust="spacingAndGlyphs" >F</text>
<text x="1278.97" y="252.70" font-size="21.3" font-weight="normal" fill="#222" textLength="15.97" lengthAdjust="spacingAndGlyphs" >G</text>
<text x="1437.38" y="252.70" font-size="21.3" font-weight="normal" fill="#222" textLength="16.03" lengthAdjust="spacingAndGlyphs" >H</text>
<text x="17.67" y="283.90" font-size="20" font-weight="normal" fill="#222" textLength="11.12" lengthAdjust="spacingAndGlyphs" >1</text>
<text x="17.94" y="314.90" font-size="20" font-weight="normal" fill="#222" textLength="11.12" lengthAdjust="spacingAndGlyphs" >2</text>
<text x="18.00" y="345.90" font-size="20" font-weight="normal" fill="#222" textLength="11.12" lengthAdjust="spacingAndGlyphs" >3</text>
<text x="18.00" y="376.90" font-size="20" font-weight="normal" fill="#222" textLength="11.12" lengthAdjust="spacingAndGlyphs" >4</text>
<text x="17.96" y="407.90" font-size="20" font-weight="normal" fill="#222" textLength="11.12" lengthAdjust="spacingAndGlyphs" >5</text>
<text x="17.87" y="438.90" font-size="20" font-weight="normal" fill="#222" textLength="11.12" lengthAdjust="spacingAndGlyphs" >6</text>
<text x="17.93" y="469.90" font-size="20" font-weight="normal" fill="#222" textLength="11.12" lengthAdjust="spacingAndGlyphs" >7</text>
<text x="17.94" y="500.90" font-size="20" font-weight="normal" fill="#222" textLength="11.12" lengthAdjust="spacingAndGlyphs" >8</text>
<text x="98.99" y="283.30" font-size="20" font-weight="bold" fill="#000" textLength="70.23" lengthAdjust="spacingAndGlyphs" >Handle</text>
<text x="298.36" y="283.30" font-size="20" font-weight="bold" fill="#000" textLength="43.15" lengthAdjust="spacingAndGlyphs" >Title</text>
<text x="449.82" y="283.30" font-size="20" font-weight="bold" fill="#000" textLength="128.61" lengthAdjust="spacingAndGlyphs" >Body (HTML)</text>
<text x="639.55" y="283.30" font-size="20" font-weight="bold" fill="#000" textLength="73.57" lengthAdjust="spacingAndGlyphs" >Vendor</text>
<text x="822.94" y="283.30" font-size="20" font-weight="bold" fill="#000" textLength="170.67" lengthAdjust="spacingAndGlyphs" >Product Category</text>
<text x="1104.77" y="283.30" font-size="20" font-weight="bold" fill="#000" textLength="48.24" lengthAdjust="spacingAndGlyphs" >Type</text>
<text x="1265.59" y="283.30" font-size="20" font-weight="bold" fill="#000" textLength="43.37" lengthAdjust="spacingAndGlyphs" >Tags</text>
<clipPath id="cH"><rect x="1395" y="259" width="101" height="31"/></clipPath>
<clipPath id="cI"><rect x="1497" y="259" width="60" height="31"/></clipPath>
<g clip-path="url(#cH)">
<text x="1396.22" y="283.30" font-size="20" font-weight="bold" fill="#000" textLength="98.44" lengthAdjust="spacingAndGlyphs" >Published</text>
</g><g clip-path="url(#cI)">
<text x="1474.46" y="283.30" font-size="20" font-weight="bold" fill="#000" textLength="77.82" lengthAdjust="spacingAndGlyphs" >Option1</text>
</g>
<text x="50.56" y="314.10" font-size="20.6" font-weight="normal" fill="#000" textLength="145.85" lengthAdjust="spacingAndGlyphs" >example-t-shirt</text>
<text x="50.56" y="345.10" font-size="20.6" font-weight="normal" fill="#000" textLength="145.85" lengthAdjust="spacingAndGlyphs" >example-t-shirt</text>
<text x="50.56" y="376.10" font-size="20.6" font-weight="normal" fill="#000" textLength="145.85" lengthAdjust="spacingAndGlyphs" >example-t-shirt</text>
<text x="49.98" y="407.10" font-size="20.6" font-weight="normal" fill="#000" textLength="142.41" lengthAdjust="spacingAndGlyphs" >example-pants</text>
<text x="49.97" y="438.10" font-size="20.6" font-weight="normal" fill="#000" textLength="120.39" lengthAdjust="spacingAndGlyphs" >example-hat</text>
<text x="224.07" y="314.10" font-size="20.6" font-weight="normal" fill="#000" textLength="151.39" lengthAdjust="spacingAndGlyphs" >Example T-Shirt</text>
<text x="224.48" y="407.10" font-size="20.6" font-weight="normal" fill="#000" textLength="141.28" lengthAdjust="spacingAndGlyphs" >Example Pants</text>
<text x="224.46" y="438.10" font-size="20.6" font-weight="normal" fill="#000" textLength="121.19" lengthAdjust="spacingAndGlyphs" >Example Hat</text>
<text x="615.96" y="314.10" font-size="20.6" font-weight="normal" fill="#000" textLength="53.88" lengthAdjust="spacingAndGlyphs" >Acme</text>
<text x="743.46" y="314.10" font-size="20.6" font-weight="normal" fill="#000" textLength="314.30" lengthAdjust="spacingAndGlyphs" >Apparel &amp; Accessories &gt; Clothing</text>
<text x="615.96" y="407.10" font-size="20.6" font-weight="normal" fill="#000" textLength="53.88" lengthAdjust="spacingAndGlyphs" >Acme</text>
<text x="743.46" y="407.10" font-size="20.6" font-weight="normal" fill="#000" textLength="314.30" lengthAdjust="spacingAndGlyphs" >Apparel &amp; Accessories &gt; Clothing</text>
<text x="615.96" y="438.10" font-size="20.6" font-weight="normal" fill="#000" textLength="53.88" lengthAdjust="spacingAndGlyphs" >Acme</text>
<text x="743.46" y="438.10" font-size="20.6" font-weight="normal" fill="#000" textLength="314.30" lengthAdjust="spacingAndGlyphs" >Apparel &amp; Accessories &gt; Clothing</text>
<text x="1080.02" y="314.10" font-size="20.6" font-weight="normal" fill="#000" textLength="55.06" lengthAdjust="spacingAndGlyphs" >Shirts</text>
<text x="1080.57" y="407.10" font-size="20.6" font-weight="normal" fill="#000" textLength="53.94" lengthAdjust="spacingAndGlyphs" >Pants</text>
<text x="1080.53" y="438.10" font-size="20.6" font-weight="normal" fill="#000" textLength="33.63" lengthAdjust="spacingAndGlyphs" >Hat</text>
<text x="1182.34" y="314.10" font-size="20.6" font-weight="normal" fill="#000" textLength="203.63" lengthAdjust="spacingAndGlyphs" >mens t-shirt example</text>
<text x="1182.58" y="407.10" font-size="20.6" font-weight="normal" fill="#000" textLength="197.37" lengthAdjust="spacingAndGlyphs" >mens pants example</text>
<text x="1182.57" y="438.10" font-size="20.6" font-weight="normal" fill="#000" textLength="176.39" lengthAdjust="spacingAndGlyphs" >mens hat example</text>
<text x="1420.58" y="314.10" font-size="20.6" font-weight="normal" fill="#000" textLength="51.23" lengthAdjust="spacingAndGlyphs" >TRUE</text>
<text x="1418.16" y="407.10" font-size="20.6" font-weight="normal" fill="#000" textLength="55.80" lengthAdjust="spacingAndGlyphs" >FALSE</text>
<text x="1418.16" y="438.10" font-size="20.6" font-weight="normal" fill="#000" textLength="55.80" lengthAdjust="spacingAndGlyphs" >FALSE</text>
<text x="1499.82" y="314.10" font-size="20.6" font-weight="normal" fill="#000" textLength="40.64" lengthAdjust="spacingAndGlyphs" >Title</text>
<text x="1499.82" y="407.10" font-size="20.6" font-weight="normal" fill="#000" textLength="40.64" lengthAdjust="spacingAndGlyphs" >Title</text>
<text x="1499.82" y="438.10" font-size="20.6" font-weight="normal" fill="#000" textLength="40.64" lengthAdjust="spacingAndGlyphs" >Title</text></svg></body></html>
